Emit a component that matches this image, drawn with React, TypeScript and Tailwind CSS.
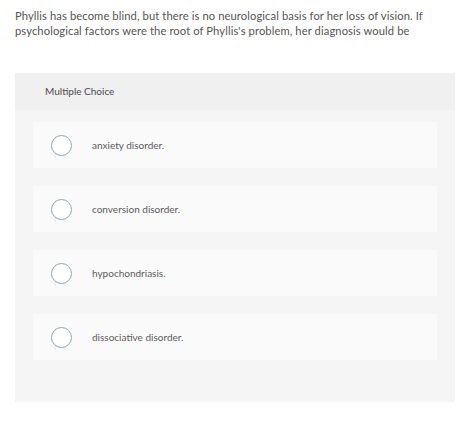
import React from "react";

const options = [
  "anxiety disorder.",
  "conversion disorder.",
  "hypochondriasis.",
  "dissociative disorder.",
];

export default function App() {
  return (
    <div
      className="w-[474px] h-[426px] bg-white text-[#555]"
      style={{ fontFamily: 'Lato, "Liberation Sans", sans-serif' }}
    >
      <div className="pt-[8px] px-[15px] text-[11.2px] leading-[15px] text-[#555] tracking-[0.1px]">
        Phyllis has become blind, but there is no neurological basis for her loss of vision. If
        <br />
        psychological factors were the root of Phyllis's problem, her diagnosis would be
      </div>
      <div className="mx-[15px] mt-[35px] w-[440px] h-[329px] bg-[#f5f5f5]">
        <div className="h-[37px] bg-[#f0f0f0] pl-[30px] flex items-center text-[10px] text-[#4a4a4a]">
          Multiple Choice
        </div>
        <div className="px-[18px] pt-[12px] flex flex-col gap-[18px]">
          {options.map((o) => (
            <div key={o} className="h-[46px] bg-[#fafafa] flex items-center">
              <div className="ml-[18px] w-[21px] h-[21px] rounded-full border-[1.5px] border-[#94a3b0] bg-white" />
              <span className="ml-[20px] text-[10px] text-[#5a5a5a]">{o}</span>
            </div>
          ))}
        </div>
      </div>
    </div>
  );
}
